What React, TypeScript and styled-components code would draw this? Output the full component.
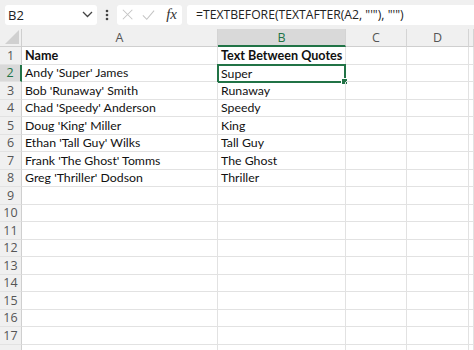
import React from "react";
import styled, { createGlobalStyle } from "styled-components";

const GlobalStyle = createGlobalStyle`
  html, body {
    margin: 0;
    padding: 0;
    background: #ffffff;
    overflow: hidden;
  }
`;

const green = "#217346";
const ROW_H = 17.5;

/* toolbar (name box, fx, formula) */
const Page = styled.div`
  width: 474px;
  height: 350px;
  overflow: hidden;
  background: #ffffff;
`;

const Toolbar = styled.div`
  display: flex;
  align-items: center;
  height: 29px;
  padding: 0 0 0 5px;
  background: #f0f0f0;
  box-sizing: border-box;
`;

const NameBox = styled.div`
  display: flex;
  align-items: center;
  justify-content: space-between;
  width: 92px;
  height: 20px;
  padding: 0 4px 0 3px;
  box-sizing: border-box;
  background: #fff;
  border-radius: 3px;
  font-family: "Open Sans", "Noto Sans", sans-serif;
  font-size: 13px;
  color: #222;
`;

const Dots = styled.div`
  width: 20px;
  display: flex;
  justify-content: center;
`;

const FxBox = styled.div`
  display: flex;
  align-items: center;
  gap: 9px;
  width: 65px;
  height: 20px;
  padding: 0 5px;
  box-sizing: border-box;
  background: #fff;
  border-radius: 3px;
`;

const FxText = styled.span`
  font-family: "Liberation Serif", serif;
  font-style: italic;
  font-size: 15px;
  color: #333;
  margin-left: 2px;
`;

const FormulaBox = styled.div`
  flex: 1;
  margin-left: 5px;
  height: 20px;
  display: flex;
  align-items: center;
  padding-left: 9px;
  background: #fff;
  border-radius: 3px 0 0 3px;
  font-family: "Open Sans", "Noto Sans", sans-serif;
  font-size: 12.2px;
  color: #222;
  white-space: nowrap;
`;

/* grid */
const Sheet = styled.div`
  display: grid;
  grid-template-columns: 22px 196px 128px 61px 62px 5px;
  grid-template-rows: 18px;
  grid-auto-rows: ${ROW_H}px;
  background: #fff;
`;

const Corner = styled.div`
  position: relative;
  background: #f0f0f0;
  border-right: 1px solid #cfcfcf;
  border-bottom: 1px solid #cfcfcf;
  box-sizing: border-box;
`;

const ColHead = styled.div<{ $active?: boolean }>`
  display: flex;
  align-items: center;
  justify-content: center;
  box-sizing: border-box;
  background: ${(p) => (p.$active ? "#d9d9d9" : "#f0f0f0")};
  border-right: 1px solid #d4d4d4;
  border-bottom: ${(p) => (p.$active ? `2px solid ${green}` : "1px solid #cfcfcf")};
  font-family: "Open Sans", "Noto Sans", sans-serif;
  font-size: 12.5px;
  color: ${(p) => (p.$active ? green : "#555")};
`;

const RowHead = styled.div<{ $active?: boolean }>`
  display: flex;
  align-items: center;
  justify-content: center;
  box-sizing: border-box;
  background: ${(p) => (p.$active ? "#d9d9d9" : "#f0f0f0")};
  border-right: ${(p) => (p.$active ? `2px solid ${green}` : "1px solid #cfcfcf")};
  border-bottom: 1px solid #e2e2e2;
  font-family: "Open Sans", "Noto Sans", sans-serif;
  font-size: 12.5px;
  color: ${(p) => (p.$active ? green : "#555")};
`;

const Cell = styled.div<{ $bold?: boolean; $selected?: boolean }>`
  position: relative;
  display: flex;
  align-items: center;
  padding-left: 3px;
  box-sizing: border-box;
  border-right: 1px solid #e2e2e2;
  border-bottom: 1px solid #e2e2e2;
  font-family: Lato, "Liberation Sans", sans-serif;
  font-size: ${(p) => (p.$bold ? "12.6px" : "12.3px")};
  font-weight: ${(p) => (p.$bold ? 700 : 400)};
  color: #111;
  white-space: nowrap;
  ${(p) =>
    p.$selected &&
    `
    border: 2px solid ${green};
    margin: -1px 0 -1px -1px;
    padding-left: 2px;
  `}
`;

const FillHandle = styled.span`
  position: absolute;
  right: -4px;
  bottom: -4px;
  width: 5px;
  height: 5px;
  background: ${green};
  border: 1px solid #fff;
`;

const names = [
  ["Andy 'Super' James", "Super"],
  ["Bob 'Runaway' Smith", "Runaway"],
  ["Chad 'Speedy' Anderson", "Speedy"],
  ["Doug 'King' Miller", "King"],
  ["Ethan 'Tall Guy' Wilks", "Tall Guy"],
  ["Frank 'The Ghost' Tomms", "The Ghost"],
  ["Greg 'Thriller' Dodson", "Thriller"],
];

const Chevron = () => (
  <svg width="11" height="7" viewBox="0 0 11 7">
    <path d="M1 1l4.5 4.5L10 1" fill="none" stroke="#444" strokeWidth="1.3" />
  </svg>
);

const VDots = () => (
  <svg width="4" height="14" viewBox="0 0 4 14">
    <circle cx="2" cy="3" r="1.3" fill="#444" />
    <circle cx="2" cy="7" r="1.3" fill="#444" />
    <circle cx="2" cy="11" r="1.3" fill="#444" />
  </svg>
);

const Cross = () => (
  <svg width="13" height="13" viewBox="0 0 13 13">
    <path d="M1 1l11 11M12 1L1 12" stroke="#c4c4c4" strokeWidth="1.2" />
  </svg>
);

const Check = () => (
  <svg width="15" height="12" viewBox="0 0 15 12">
    <path d="M1 6.5l4.5 4.5L14 1" fill="none" stroke="#c4c4c4" strokeWidth="1.2" />
  </svg>
);

const Triangle = () => (
  <svg width="14" height="14" viewBox="0 0 14 14" style={{ position: "absolute", right: 2, bottom: 2 }}>
    <path d="M14 0V14H0Z" fill="#d0d0d0" />
  </svg>
);

export default function App() {
  const rows: React.ReactNode[] = [];
  for (let r = 1; r <= 18; r++) {
    const data = r === 1 ? ["Name", "Text Between Quotes"] : names[r - 2] || ["", ""];
    rows.push(
      <React.Fragment key={r}>
        <RowHead $active={r === 2}>{r <= 17 ? r : ""}</RowHead>
        <Cell $bold={r === 1}>{data[0]}</Cell>
        <Cell $bold={r === 1} $selected={r === 2}>
          {data[1]}
          {r === 2 && <FillHandle />}
        </Cell>
        <Cell />
        <Cell />
        <Cell />
      </React.Fragment>
    );
  }

  return (
    <Page>
      <GlobalStyle />
      <Toolbar>
        <NameBox>
          <span>B2</span>
          <Chevron />
        </NameBox>
        <Dots>
          <VDots />
        </Dots>
        <FxBox>
          <Cross />
          <Check />
          <FxText>fx</FxText>
        </FxBox>
        <FormulaBox>=TEXTBEFORE(TEXTAFTER(A2, "'"), "'")</FormulaBox>
      </Toolbar>
      <Sheet>
        <Corner>
          <Triangle />
        </Corner>
        <ColHead>A</ColHead>
        <ColHead $active>B</ColHead>
        <ColHead>C</ColHead>
        <ColHead>D</ColHead>
        <ColHead />
        {rows}
      </Sheet>
    </Page>
  );
}
